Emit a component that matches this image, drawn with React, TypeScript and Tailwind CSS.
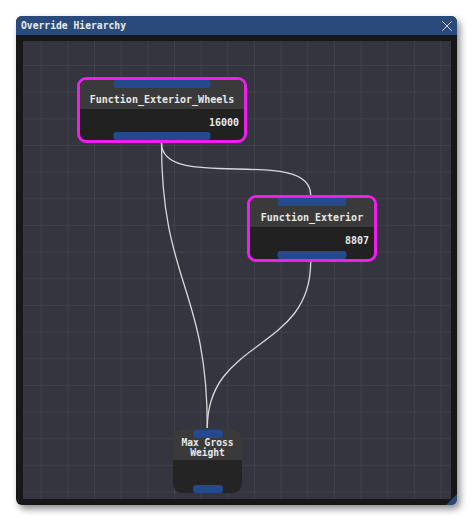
import { X } from "lucide-react";

const mono = "font-['DejaVu_Sans_Mono',monospace]";

function Pin({ className }: { className: string }) {
  return <div className={`absolute left-1/2 h-[8px] -translate-x-1/2 rounded-[3px] bg-[#24498c] ${className}`} />;
}

function ValueNode({
  title,
  value,
  pinWidth,
  className,
}: {
  title: string;
  value: string;
  pinWidth: string;
  className: string;
}) {
  return (
    <div
      className={`absolute flex flex-col overflow-hidden rounded-[9px] border-[3px] border-[#ee1fee] bg-[#212121] ${className}`}
    >
      <div className={`h-[29px] shrink-0 bg-[#3a3a3a] pt-[10px] text-center text-[10px] leading-[19px] font-semibold text-[#e8e8e8] ${mono}`}>
        {title}
      </div>
      <div className={`flex-1 pr-[5px] pt-[6px] text-right text-[10px] leading-[16px] font-semibold text-[#e8e8e8] ${mono}`}>
        {value}
      </div>
      <Pin className={`top-0 ${pinWidth}`} />
      <Pin className={`bottom-0 ${pinWidth}`} />
    </div>
  );
}

function Links() {
  return (
    <svg className="absolute inset-0" width="428" height="458" fill="none">
      <g stroke="#d9d9d9" strokeWidth="1.3">
        <path d="M138.5 102 C138.5 152 287.7 104 287.7 154" />
        <path d="M138.5 102 C138.5 242 184.3 247 184.3 387" />
        <path d="M287.7 221 C287.7 311 184.3 297 184.3 387" />
      </g>
    </svg>
  );
}

export default function App() {
  return (
    <div className="h-[523px] w-[474px] bg-white pt-[16px] pl-[16px]">
      <div className="relative flex h-[489px] w-[441px] flex-col overflow-hidden rounded-[6px] bg-[#171717] shadow-[3px_4px_7px_rgba(0,0,0,0.45)]">
        <div className="flex h-[19px] shrink-0 items-center justify-between bg-[#2a4a7b] pr-[1px] pl-[5px]">
          <span className={`text-[9.7px] leading-none font-semibold text-[#ececec] ${mono}`}>
            Override Hierarchy
          </span>
          <X size={18} strokeWidth={1.2} className="text-[#e4e4e4]" />
        </div>

        <div className="flex flex-1 pt-[6px] pr-[6px] pb-[6px] pl-[7px]">
          <div className="relative flex-1 overflow-hidden bg-[#34353e] bg-[linear-gradient(to_right,#40414b_1px,transparent_1px),linear-gradient(to_bottom,#40414b_1px,transparent_1px)] bg-[size:26.67px_26.67px] bg-[position:17.7px_24px]">
            <Links />

            <ValueNode
              title="Function_Exterior_Wheels"
              value="16000"
              pinWidth="w-[97px]"
              className="top-[36px] left-[54px] h-[66px] w-[170px]"
            />
            <ValueNode
              title="Function_Exterior"
              value="8807"
              pinWidth="w-[69px]"
              className="top-[154px] left-[224px] h-[67px] w-[130px]"
            />

            <div className="absolute top-[388px] left-[150px] flex h-[64px] w-[69px] flex-col overflow-hidden rounded-[9px] bg-[#242424]">
              <div className={`h-[31px] shrink-0 bg-[#3a3a3a] pt-[9px] text-center text-[9.6px] leading-[10px] font-semibold text-[#e8e8e8] ${mono}`}>
                Max Gross
                <br />
                Weight
              </div>
              <Pin className="top-[1px] w-[30px]" />
              <Pin className="bottom-0 w-[30px]" />
            </div>
          </div>
        </div>

        {/* resize grip */}
        <svg className="absolute right-0 bottom-0" width="11" height="11">
          <path d="M11 0 L11 11 L0 11 Z" fill="#2d5590" fillOpacity="0.8" />
        </svg>
      </div>
    </div>
  );
}
